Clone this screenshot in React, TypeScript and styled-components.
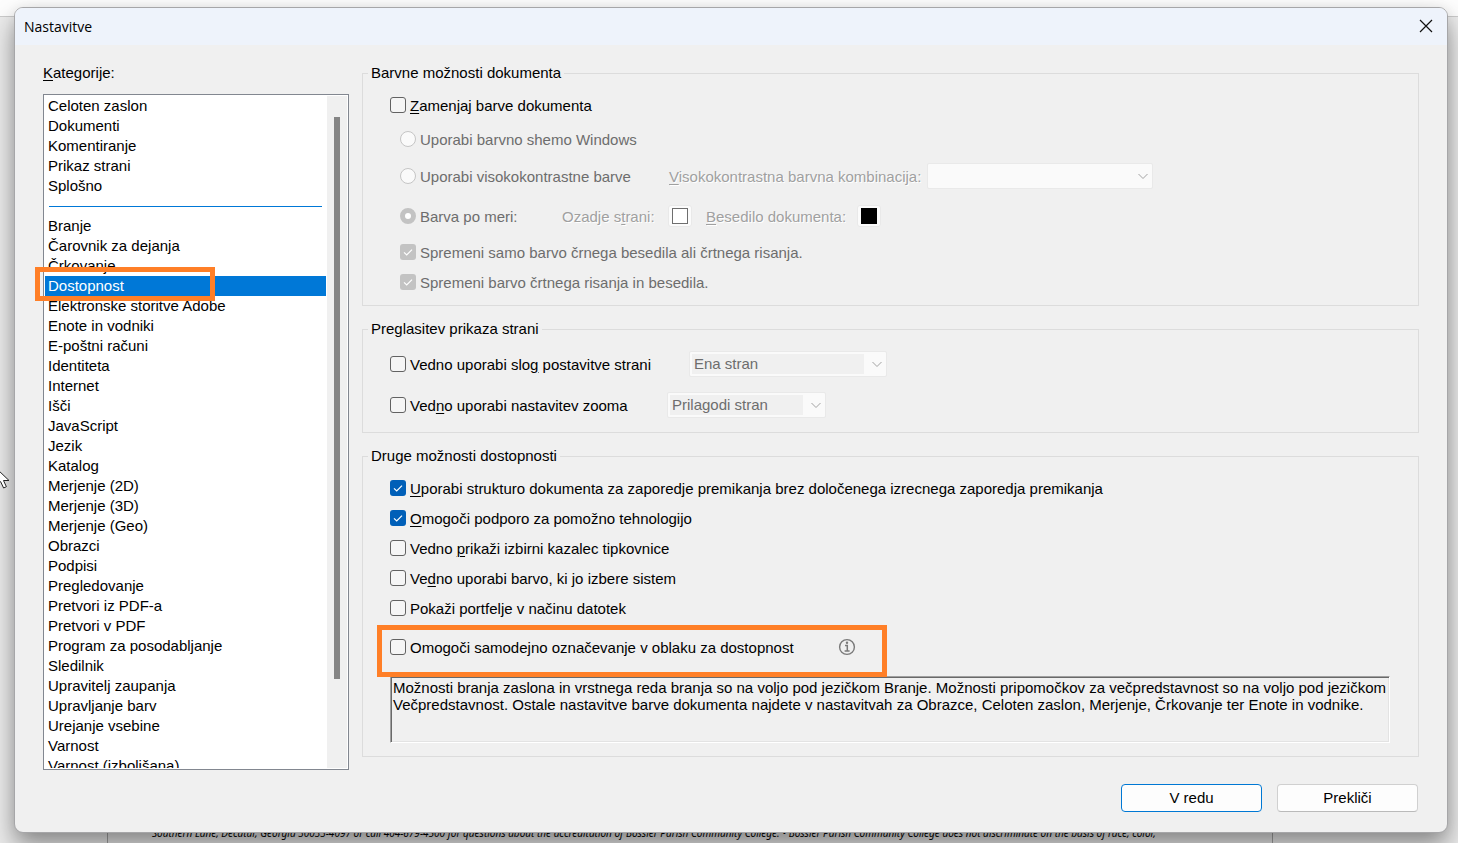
import React from 'react';
import styled, { createGlobalStyle, css } from 'styled-components';

const GlobalStyle = createGlobalStyle`
  *, *::before, *::after { box-sizing: border-box; }
  body {
    margin: 0;
    font-family: "Liberation Sans", Arial, sans-serif;
    font-size: 15px;
    line-height: 18px;
    color: #000;
    background: #ececec;
  }
  u { text-underline-offset: 2px; text-decoration-thickness: 1px; }
`;

const Page = styled.div`
  position: relative;
  min-height: 100vh;
  padding: 7px 10px 10px 14px;
  overflow: hidden;
`;

const Backdrop = styled.div`
  position: absolute;
  inset: 0;
  display: flex;
  flex-direction: column;
  justify-content: space-between;
`;

const TopStrip = styled.div`
  height: 17px;
  background: #fdfdfd;
  border-bottom: 1px solid #cbcbcb;
`;

const Sheet = styled.div`
  height: 36px;
  margin: 0 185px 0 107px;
  padding: 20px 0 0 44px;
  border: solid #a4a4a4;
  border-width: 0 1px;
  background: #e9e9e9;
  overflow: hidden;
  white-space: nowrap;
  font: italic 10px/12px "Noto Sans", sans-serif;
`;

const SheetLine = styled.p`
  margin: 0;
`;

const Pointer = styled.svg`
  position: absolute;
  left: -4px;
  top: 468px;
`;

const Dialog = styled.main`
  position: relative;
  border: 1px solid #a6a6a8;
  border-radius: 9px;
  background: #f0f0f0;
  box-shadow: 0 14px 26px rgba(0, 0, 0, 0.4), 0 0 12px rgba(0, 0, 0, 0.06);
`;

const TitleBar = styled.header`
  display: flex;
  align-items: center;
  justify-content: space-between;
  height: 37px;
  padding: 0 10px 0 9px;
  border-radius: 8px 8px 0 0;
  background: #eef3fb;
`;

const Title = styled.h1`
  margin: 0;
  font: 400 14px/20px "Open Sans", sans-serif;
`;

const CloseButton = styled.button`
  display: flex;
  padding: 4px 4px 6px;
  border: 0;
  background: none;
`;

const Body = styled.div`
  display: grid;
  grid-template-columns: 306px 1fr;
  column-gap: 13px;
  padding: 19px 28px 0;
`;

const Sidebar = styled.section`
  position: relative;
`;

const SidebarLabel = styled.div`
  margin-bottom: 12px;
`;

const ListBox = styled.div`
  display: flex;
  justify-content: space-between;
  height: 676px;
  padding: 1px;
  border: 1px solid #828790;
  background: #fff;
`;

const Items = styled.ul`
  flex: 1;
  margin: 0;
  padding: 0;
  list-style: none;
  overflow: hidden;
`;

const Item = styled.li<{ $selected?: boolean }>`
  height: 20px;
  padding-left: 3px;
  line-height: 20px;
  ${(p) => p.$selected && css`
    background: #0078d7;
    color: #fff;
  `}
`;

const Divider = styled.li`
  height: 20px;
  padding: 10px 4px 0;
  &::before {
    content: "";
    display: block;
    height: 1px;
    background: #0078d7;
  }
`;

const ScrollTrack = styled.div`
  width: 20px;
  margin-left: 1px;
  padding: 21px 7px 0;
  background: #f0f0f0;
`;

const ScrollThumb = styled.div`
  height: 562px;
  background: #858585;
`;

const Highlight = styled.div<{ $box: string }>`
  position: absolute;
  inset: ${(p) => p.$box};
  border: 5px solid #ff7f27;
  pointer-events: none;
`;

const HighlightAnchor = styled.div`
  position: absolute;
  top: 0;
  left: 0;
  width: 497px;
  height: 30px;
  pointer-events: none;
`;

const Panels = styled.div`
  display: flex;
  flex-direction: column;
  gap: 14px;
`;

const Group = styled.fieldset<{ $pad?: string }>`
  min-width: 0;
  margin: 0;
  padding: ${(p) => p.$pad || '8px 28px 8px 27px'};
  border: 1px solid #dcdcdc;
`;

const Legend = styled.legend`
  margin-left: -22px;
  padding: 0 3px;
`;

const Row = styled.div<{ $top?: number; $indent?: boolean }>`
  position: relative;
  display: flex;
  align-items: center;
  height: 30px;
  margin-top: ${(p) => p.$top || 0}px;
  padding-left: ${(p) => (p.$indent ? 10 : 0)}px;
`;

const Choice = styled.label<{ $width?: number; $muted?: boolean }>`
  display: flex;
  align-items: center;
  gap: 4px;
  width: ${(p) => (p.$width ? `${p.$width}px` : 'auto')};
  white-space: nowrap;
  color: ${(p) => (p.$muted ? '#6d6d6d' : '#000')};
`;

const ChoiceText = styled.span`
  padding-top: 1px;
`;

const tick = `url("data:image/svg+xml,%3Csvg xmlns='http://www.w3.org/2000/svg' viewBox='0 0 16 16' fill='none' stroke='%23ffffff' stroke-width='1.2'%3E%3Cpath d='M4 8.4 6.7 11 12 5.6'/%3E%3C/svg%3E")`;

const Check = styled.input`
  appearance: none;
  flex: none;
  width: 16px;
  height: 16px;
  margin: 0;
  border: 1px solid #626262;
  border-radius: 3px;
  background: #f5f5f5;
  &:checked {
    border: 0;
    background: #005fb8 ${tick};
  }
  &:checked:disabled {
    background: #c3c3c3 ${tick};
  }
`;

const Radio = styled.input`
  appearance: none;
  flex: none;
  width: 16px;
  height: 16px;
  margin: 0;
  border: 1px solid #c5c5c5;
  border-radius: 50%;
  background: #fafafa;
  &:checked {
    border: 5px solid #c3c3c3;
    background: #fff;
  }
`;

const Etched = styled.label<{ $width: number }>`
  width: ${(p) => p.$width}px;
  padding-top: 1px;
  white-space: nowrap;
  color: #a0a0a0;
  text-shadow: 1px 1px 0 #fff;
`;

const Combo = styled.div<{ $width: number }>`
  position: relative;
  display: flex;
  width: ${(p) => p.$width}px;
  height: 26px;
`;

const Select = styled.select<{ $filled?: boolean }>`
  appearance: none;
  width: 100%;
  padding: 0 24px 0 4px;
  border: 1px solid #e9e9e9;
  border-radius: 2px;
  background: #fafafa;
  font: inherit;
  color: #6d6d6d;
  opacity: 1;
  ${(p) => p.$filled && css`
    background: linear-gradient(#f0f0f0, #f0f0f0) 2px 2px / calc(100% - 24px) 20px no-repeat #fafafa;
  `}
`;

const Chevron = styled.svg`
  position: absolute;
  right: 4px;
  top: 7px;
  pointer-events: none;
`;

const Swatch = styled.button<{ $color: string; $edge: string }>`
  display: flex;
  align-items: center;
  justify-content: center;
  width: 24px;
  height: 22px;
  padding: 0;
  border: 1px solid #e9e9e9;
  border-radius: 3px;
  background: #fbfbfb;
  &::before {
    content: "";
    width: 16px;
    height: 16px;
    border: 1px solid ${(p) => p.$edge};
    background: ${(p) => p.$color};
  }
`;

const Fields = styled.div`
  display: flex;
  align-items: center;
  gap: 14px;
`;

const Field = styled.div`
  display: flex;
  align-items: center;
`;

const InfoButton = styled.button`
  display: flex;
  margin: 0;
  padding: 0;
  border: 0;
  background: none;
`;

const Note = styled.div`
  min-height: 67px;
  margin-top: 14px;
  padding: 2px;
  border: 1px solid;
  border-color: #a0a0a0 #fff #fff #a0a0a0;
  box-shadow: inset 1px 1px 0 #696969, inset -1px -1px 0 #e3e3e3;
  line-height: 17px;
`;

const Footer = styled.footer`
  display: flex;
  justify-content: flex-end;
  gap: 15px;
  padding: 14px 29px 20px;
`;

const DialogButton = styled.button<{ $primary?: boolean }>`
  width: 141px;
  height: 28px;
  padding: 0;
  border: 1px solid ${(p) => (p.$primary ? '#0078d4' : '#d0d0d0')};
  border-bottom-color: ${(p) => (p.$primary ? '#0078d4' : '#bababa')};
  border-radius: 4px;
  background: #fdfdfd;
  font: inherit;
  color: #000;
`;

const general = ['Celoten zaslon', 'Dokumenti', 'Komentiranje', 'Prikaz strani', 'Splošno'];

const categories = [
  'Branje', 'Čarovnik za dejanja', 'Črkovanje', 'Dostopnost', 'Elektronske storitve Adobe',
  'Enote in vodniki', 'E-poštni računi', 'Identiteta', 'Internet', 'Išči', 'JavaScript', 'Jezik',
  'Katalog', 'Merjenje (2D)', 'Merjenje (3D)', 'Merjenje (Geo)', 'Obrazci', 'Podpisi',
  'Pregledovanje', 'Pretvori iz PDF-a', 'Pretvori v PDF', 'Program za posodabljanje', 'Sledilnik',
  'Upravitelj zaupanja', 'Upravljanje barv', 'Urejanje vsebine', 'Varnost', 'Varnost (izboljšana)',
];

type OptionProps = {
  children: React.ReactNode;
  checked?: boolean;
  disabled?: boolean;
  width?: number;
};

const CheckOption = ({ children, checked, disabled, width }: OptionProps) => (
  <Choice $width={width} $muted={disabled}>
    <Check type="checkbox" defaultChecked={checked} disabled={disabled} />
    <ChoiceText>{children}</ChoiceText>
  </Choice>
);

const RadioOption = ({ children, checked, width }: OptionProps) => (
  <Choice $width={width} $muted>
    <Radio type="radio" name="colors" defaultChecked={checked} disabled />
    <ChoiceText>{children}</ChoiceText>
  </Choice>
);

type ComboProps = { id?: string; label?: string; width: number; value?: string };

const ComboBox = ({ id, label, width, value }: ComboProps) => (
  <Combo $width={width}>
    <Select id={id} aria-label={label} disabled $filled={!!value}>
      <option>{value}</option>
    </Select>
    <Chevron width="12" height="12" viewBox="0 0 12 12" fill="none" stroke="#a3a3a3">
      <path d="M1.5 4 6 8.5 10.5 4" />
    </Chevron>
  </Combo>
);

export default function App() {
  return (
    <Page>
      <GlobalStyle />
      <Backdrop>
        <TopStrip />
        <Sheet>
          <SheetLine>
            Southern Lane, Decatur, Georgia 30033-4097 or call 404-679-4500 for questions about the accreditation of
            Bossier Parish Community College. • Bossier Parish Community College does not discriminate on the basis of race, color,
          </SheetLine>
        </Sheet>
      </Backdrop>
      <Dialog role="dialog" aria-labelledby="dialog-title">
        <TitleBar>
          <Title id="dialog-title">Nastavitve</Title>
          <CloseButton aria-label="Zapri">
            <svg width="14" height="14" viewBox="0 0 14 14" stroke="#111" strokeWidth="1.2">
              <path d="M1 1 13 13M13 1 1 13" />
            </svg>
          </CloseButton>
        </TitleBar>
        <Body>
          <Sidebar>
            <SidebarLabel id="categories-label"><u>K</u>ategorije:</SidebarLabel>
            <ListBox>
              <Items role="listbox" aria-labelledby="categories-label">
                {general.map((name) => <Item key={name} role="option">{name}</Item>)}
                <Divider role="presentation" />
                {categories.map((name) => (
                  <Item key={name} role="option" aria-selected={name === 'Dostopnost'} $selected={name === 'Dostopnost'}>
                    {name}
                  </Item>
                ))}
              </Items>
              <ScrollTrack><ScrollThumb /></ScrollTrack>
            </ListBox>
            <Highlight $box="203px 134px 469px -8px" />
          </Sidebar>
          <Panels>
            <Group>
              <Legend>Barvne možnosti dokumenta</Legend>
              <Row><CheckOption><u>Z</u>amenjaj barve dokumenta</CheckOption></Row>
              <Row $top={4} $indent><RadioOption>Uporabi barvno shemo Windows</RadioOption></Row>
              <Row $top={7} $indent>
                <RadioOption width={269}>Uporabi visokokontrastne barve</RadioOption>
                <Etched htmlFor="contrast" $width={258}><u>V</u>isokokontrastna barvna kombinacija:</Etched>
                <ComboBox id="contrast" width={226} />
              </Row>
              <Row $top={10} $indent>
                <RadioOption checked width={162}>Barva po meri:</RadioOption>
                <Fields>
                  <Field>
                    <Etched htmlFor="page-color" $width={106}>Ozadje s<u>t</u>rani:</Etched>
                    <Swatch id="page-color" disabled $color="#fff" $edge="#6e6e6e" />
                  </Field>
                  <Field>
                    <Etched htmlFor="text-color" $width={151}><u>B</u>esedilo dokumenta:</Etched>
                    <Swatch id="text-color" disabled $color="#000" $edge="#000" />
                  </Field>
                </Fields>
              </Row>
              <Row $top={6} $indent>
                <CheckOption checked disabled>Spremeni samo barvo črnega besedila ali črtnega risanja.</CheckOption>
              </Row>
              <Row $indent><CheckOption checked disabled>Spremeni barvo črtnega risanja in besedila.</CheckOption></Row>
            </Group>
            <Group $pad="11px 28px 12px 27px">
              <Legend>Preglasitev prikaza strani</Legend>
              <Row>
                <CheckOption width={299}>Vedno uporabi slo<u>g</u> postavitve strani</CheckOption>
                <ComboBox label="Slog postavitve strani" width={198} value="Ena stran" />
              </Row>
              <Row $top={11}>
                <CheckOption width={277}>Ved<u>n</u>o uporabi nastavitev zooma</CheckOption>
                <ComboBox label="Nastavitev zooma" width={159} value="Prilagodi stran" />
              </Row>
            </Group>
            <Group $pad="8px 28px 13px 27px">
              <Legend>Druge možnosti dostopnosti</Legend>
              <Row>
                <CheckOption checked>
                  <u>U</u>porabi strukturo dokumenta za zaporedje premikanja brez določenega izrecnega zaporedja premikanja
                </CheckOption>
              </Row>
              <Row><CheckOption checked><u>O</u>mogoči podporo za pomožno tehnologijo</CheckOption></Row>
              <Row><CheckOption>Vedno <u>p</u>rikaži izbirni kazalec tipkovnice</CheckOption></Row>
              <Row><CheckOption>Ve<u>d</u>no uporabi barvo, ki jo izbere sistem</CheckOption></Row>
              <Row><CheckOption>Pokaži portfelje v načinu datotek</CheckOption></Row>
              <Row $top={9}>
                <CheckOption width={448}>Omogoči samodejno označevanje v oblaku za dostopnost</CheckOption>
                <InfoButton aria-label="Informacije">
                  <svg width="18" height="18" viewBox="0 0 18 18" fill="none" stroke="#7a7a7a">
                    <circle cx="9" cy="9" r="7.4" strokeWidth="1.4" />
                    <path d="M7 7.5h2.3v5.3M6.6 13h5" strokeWidth="1.5" />
                    <circle cx="9" cy="4.8" r="1.2" fill="#7a7a7a" stroke="none" />
                  </svg>
                </InfoButton>
                <HighlightAnchor><Highlight $box="-7px 0 -15px -13px" /></HighlightAnchor>
              </Row>
              <Note>
                Možnosti branja zaslona in vrstnega reda branja so na voljo pod jezičkom Branje. Možnosti pripomočkov za
                večpredstavnost so na voljo pod jezičkom Večpredstavnost. Ostale nastavitve barve dokumenta najdete v
                nastavitvah za Obrazce, Celoten zaslon, Merjenje, Črkovanje ter Enote in vodnike.
              </Note>
            </Group>
          </Panels>
        </Body>
        <Footer>
          <DialogButton $primary>V redu</DialogButton>
          <DialogButton>Prekliči</DialogButton>
        </Footer>
      </Dialog>
      <Pointer width="14" height="24" viewBox="0 0 14 24">
        <path d="M1 1v16l3.6-3.4 3 6.4 2.8-1.3-2.9-6.2H13z" fill="#fff" stroke="#222" />
      </Pointer>
    </Page>
  );
}
